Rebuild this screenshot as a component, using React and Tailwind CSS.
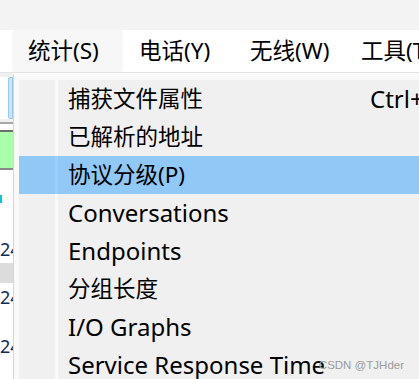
import React from 'react';

const items = [
  { label: '捕获文件属性', shortcut: 'Ctrl+Alt+Shift+C', cjk: true },
  { label: '已解析的地址', cjk: true },
  { label: '协议分级(P)', active: true, cjk: true },
  { label: 'Conversations' },
  { label: 'Endpoints' },
  { label: '分组长度', cjk: true },
  { label: 'I/O Graphs' },
  { label: 'Service Response Time' },
];

const menus = ['统计(S)', '电话(Y)', '无线(W)', '工具(T)'];

const font = { fontFamily: '"Noto Sans", "Noto Sans CJK SC", sans-serif' };

export default function App() {
  return (
    <div className="relative w-[419px] h-[379px] overflow-hidden bg-white" style={font}>
      <div className="h-[30px] bg-[#f3f3f3]" />

      <div className="h-[43px] bg-white flex items-stretch pl-[12px] border-b border-[#e3e3e3]">
        {menus.map((m, i) => (
          <div
            key={m}
            className={`shrink-0 w-[111px] pl-[16px] flex items-center text-[22.5px] text-black whitespace-nowrap ${i === 0 ? 'bg-[#f7f7f7] rounded-[3px]' : ''}`}
          >
            {m}
          </div>
        ))}
      </div>

      <div className="w-[13px] flex flex-col text-[18px] leading-none overflow-hidden">
        <div className="h-[4px] bg-[#f0f0f0]" />
        <div className="h-[42px] ml-[8px] bg-[#cce4f7] border border-[#99c9ef] rounded-l-[2px]" />
        <div className="h-[3px] bg-[#f0f0f0]" />
        <div className="h-[2px] bg-[#a8a8a8]" />
        <div className="h-[6px] bg-white" />
        <div className="h-[2px] bg-[#6e6e6e]" />
        <div className="h-[36px] bg-[#aaffaa]" />
        <div className="h-[2px] bg-[#8a8a8a]" />
        <div className="h-[24px] bg-white" />
        <div className="h-[10px] bg-white flex items-center">
          <div className="w-[2px] h-[8px] bg-[#00c8d8]" />
        </div>
        <div className="h-[36px] bg-white" />
        <div className="h-[18px] bg-white text-[#102a60] whitespace-nowrap">24</div>
        <div className="h-[5px] bg-white" />
        <div className="h-[20px] bg-[#dcdcdc]" />
        <div className="h-[5px] bg-white" />
        <div className="h-[18px] bg-white text-[#102a60] whitespace-nowrap">24</div>
        <div className="h-[31px] bg-white" />
        <div className="h-[18px] bg-white text-[#102a60] whitespace-nowrap">24</div>
        <div className="flex-1 bg-white" />
      </div>

      <div className="absolute left-[13px] top-[74px] w-[420px] bg-[#f9f9f9] border-l border-[#d6d6d6] pt-[6px] pl-[5px]">
        {items.map((it) => (
          <div
            key={it.label}
            className={`flex h-[38px] ${it.active ? 'bg-[#90c8f6]' : ''}`}
          >
            <div className={`w-[36px] shrink-0 ${it.active ? '' : 'bg-[#f0f0f0]'}`} />
            <div className={`w-[3px] shrink-0 ${it.active ? 'bg-[#9fcff7]' : ''}`} />
            <div
              className={`flex-1 flex items-center pl-[10px] text-black whitespace-nowrap ${it.cjk ? 'text-[22.5px]' : 'text-[24px]'} ${it.active ? '' : 'bg-[#f0f0f0]'}`}
            >
              <span className="w-[302px] shrink-0">{it.label}</span>
              {it.shortcut && <span className="text-[24px]">{it.shortcut}</span>}
            </div>
          </div>
        ))}
      </div>

      <div
        className="absolute right-[15px] bottom-[8px] text-[11.5px] text-[#9a9a9a] leading-none"
        style={{ fontFamily: '"Liberation Sans", "Noto Sans CJK SC", sans-serif' }}
      >
        CSDN @TJHder
      </div>
    </div>
  );
}
